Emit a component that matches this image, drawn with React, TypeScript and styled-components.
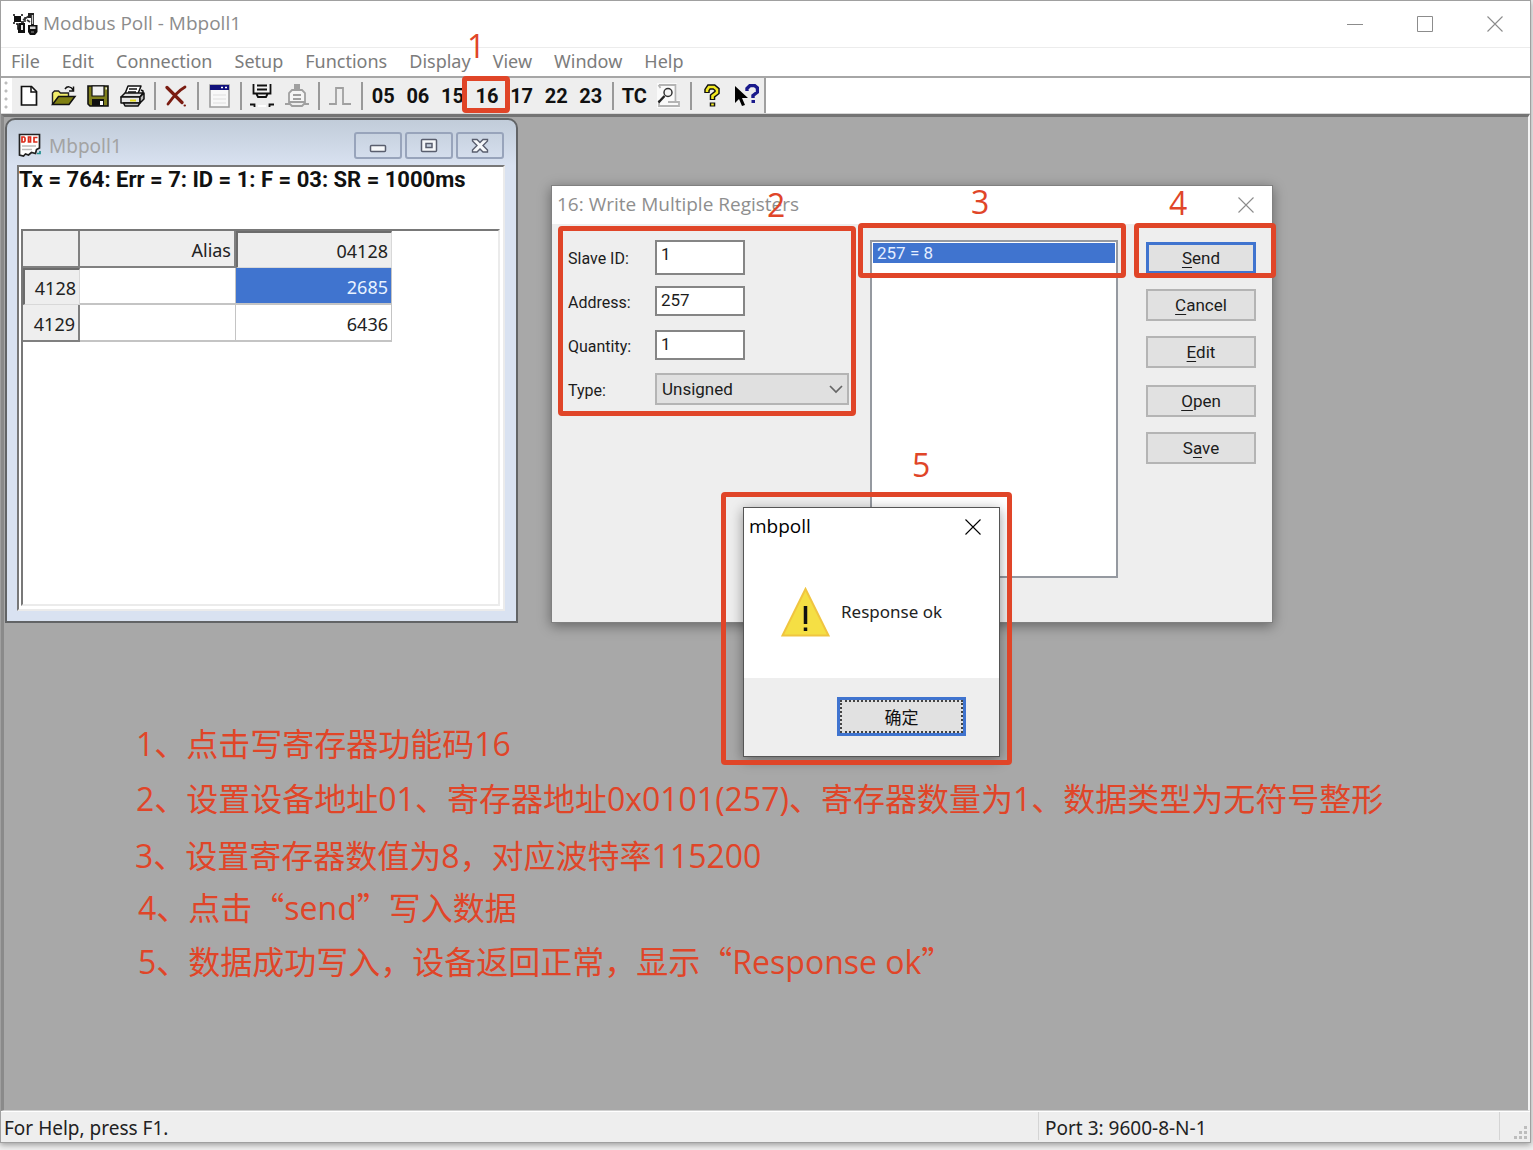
import React from "react";
import styled, { createGlobalStyle, css } from "styled-components";

const ui = `"Noto Sans", "Open Sans", "Noto Sans CJK SC", sans-serif`;
const legacy = `Roboto, "Liberation Sans", sans-serif`;
const hand = `"Open Sans", "Noto Sans CJK SC", sans-serif`;
const red = "#e04528";
const blue = "#4074cf";
const face = "#eeeeee";

const GlobalStyle = createGlobalStyle`
  * { box-sizing: border-box; }
  body { margin: 0; background: #f0f0f0; font-family: ${ui}; }
  button, input, select { font: inherit; color: inherit; margin: 0; }
`;

/* ---------- application frame ---------- */

const Screen = styled.div`
  position: relative;
  min-height: 100vh;
  padding: 0 2px 7px 0;
  display: flex;
  overflow: hidden;
`;

const Frame = styled.main`
  flex: 1;
  min-width: 0;
  display: flex;
  flex-direction: column;
  border: 1px solid #a0a0a0;
  background: #fff;
  box-shadow: 0 2px 6px rgba(0, 0, 0, 0.35);
`;

const TitleBar = styled.header`
  display: flex;
  align-items: center;
  height: 47px;
  padding-left: 12px;
  border-bottom: 1px solid #ececec;
  color: #8c8c8c;
`;

const AppTitle = styled.h1`
  flex: 1;
  margin: 0 0 0 5px;
  padding-bottom: 2px;
  font-family: "Open Sans", sans-serif;
  font-size: 19px;
  line-height: 26px;
  font-weight: 400;
`;

const CaptionButton = styled.button`
  display: grid;
  place-items: center;
  width: 70px;
  height: 46px;
  padding: 0;
  border: 0;
  background: none;
`;

const MenuBar = styled.nav`
  display: flex;
  gap: 22px;
  height: 28px;
  padding-left: 10px;
  background: #fff;
`;

const MenuItem = styled.a`
  color: #7c7c7c;
  font-size: 18px;
  line-height: 26px;
  text-decoration: none;
`;

const ToolStrip = styled.div`
  display: flex;
  height: 38px;
  border-top: 2px solid #a6a6a6;
  border-bottom: 1px solid #d8d8d8;
  background: #fff;
`;

const Grip = styled.span`
  width: 11px;
  background: radial-gradient(circle, #bdbdbd 1px, transparent 2px) 1px 1px / 8px 8px repeat-y;
`;

const ToolBar = styled.div`
  display: flex;
  align-items: center;
  background: ${face};
  border-right: 2px solid #a0a0a0;
`;

const ToolGroup = styled.div<{ $width: number }>`
  display: flex;
  width: ${(p) => p.$width}px;
  height: 34px;
`;

const ToolButton = styled.button`
  flex: 1;
  display: grid;
  place-items: center;
  padding: 0;
  border: 0;
  background: none;
  color: #111;
  font-family: ${legacy};
  font-size: 20px;
  font-weight: 700;
  line-height: 34px;
`;

const Divider = styled.span`
  width: 9px;
  height: 28px;
  background: linear-gradient(#999, #999) center / 2px 100% no-repeat;
`;

const Workspace = styled.section`
  position: relative;
  flex: 1;
  min-height: 640px;
  background: #a8a8a8;
  border: solid;
  border-width: 3px 2px 1px 3px;
  border-color: #747474 #f4f4f4 #d0d0d0 #8a8a8a;
`;

const StatusBar = styled.footer`
  display: flex;
  align-items: stretch;
  height: 31px;
  padding-bottom: 2px;
  background: ${face};
  border-top: 1px solid #fff;
  color: #222;
  font-size: 19px;
  line-height: 32px;
`;

const StatusText = styled.span`
  flex: 1;
  padding-left: 3px;
`;

const StatusPort = styled.span`
  width: 462px;
  padding-left: 6px;
  border-left: 1px solid #d4d4d4;
  border-right: 1px solid #d4d4d4;
`;

const SizeGrip = styled.span`
  width: 30px;
  display: flex;
  justify-content: flex-end;
  align-items: flex-end;
  padding: 0 3px 1px 0;
`;

/* ---------- document window ---------- */

const DocWindow = styled.article`
  position: absolute;
  left: 1px;
  top: 1px;
  width: 513px;
  height: 505px;
  display: flex;
  flex-direction: column;
  padding: 0 11px 10px 10px;
  border: 2px solid #626466;
  border-radius: 10px 10px 0 0;
  background: linear-gradient(#c1ccd9, #d9e2f1 46px);
`;

const DocTitle = styled.header`
  display: flex;
  align-items: center;
  height: 45px;
  padding: 6px 1px 0;
`;

const DocName = styled.h2`
  flex: 1;
  margin: 0 0 0 7px;
  color: #a3a3a3;
  font-size: 19px;
  line-height: 26px;
  font-weight: 400;
`;

const DocButtons = styled.div`
  display: flex;
  gap: 3px;
`;

const DocButton = styled.button`
  display: grid;
  place-items: center;
  width: 48px;
  height: 27px;
  padding: 0;
  border: 2px solid #98a4bb;
  border-radius: 3px;
  background: transparent;
`;

const sunken = css`
  border: solid;
  border-width: 2px;
  border-color: #787878 #ebebeb #ebebeb #787878;
`;

const DocClient = styled.div`
  flex: 1;
  display: flex;
  flex-direction: column;
  background: #fff;
  ${sunken}
`;

const PollStatus = styled.p`
  flex: none;
  height: 62px;
  margin: 0;
  color: #111;
  font-family: ${legacy};
  font-size: 22px;
  font-weight: 700;
  line-height: 25px;
  white-space: nowrap;
`;

const GridPane = styled.div`
  flex: 1;
  margin: 0 3px 3px 2px;
  ${sunken}
`;

const DataTable = styled.table`
  border-collapse: separate;
  border-spacing: 0;
  table-layout: fixed;
  width: 369px;
  color: #222;
  font-size: 18px;
  line-height: 28px;
`;

const Cell = styled.td<{ $selected?: boolean }>`
  height: 37px;
  padding: 2px 3px 0 0;
  text-align: right;
  border: solid #c4c4c4;
  border-width: 0 1px 2px 0;
  background: ${(p) => (p.$selected ? blue : "#fff")};
  color: ${(p) => (p.$selected ? "#e8f2ff" : "#222")};
`;

const HeadCell = styled.th<{ $active?: boolean; $width?: number }>`
  width: ${(p) => (p.$width ? p.$width + "px" : "auto")};
  height: 37px;
  padding: 2px 3px 0 0;
  text-align: right;
  font-weight: 400;
  background: ${face};
  border: solid;
  border-width: ${(p) => (p.$active ? "2px 1px 1px 2px" : "0 2px 2px 0")};
  border-color: ${(p) => (p.$active ? "#6c6c6c #d8d8d8 #d8d8d8 #6c6c6c" : "#808080")};
`;

/* ---------- dialogs ---------- */

const Dialog = styled.section<{ $x: number; $y: number; $width: number; $height: number; $active?: boolean }>`
  position: absolute;
  left: ${(p) => p.$x}px;
  top: ${(p) => p.$y}px;
  width: ${(p) => p.$width}px;
  height: ${(p) => p.$height}px;
  display: flex;
  flex-direction: column;
  border: 1px solid ${(p) => (p.$active ? "#555" : "#808080")};
  background: ${face};
  color: ${(p) => (p.$active ? "#000" : "#8e8e8e")};
  box-shadow: 0 3px 12px rgba(0, 0, 0, 0.4);
`;

const DialogTitle = styled.header`
  display: flex;
  align-items: center;
  height: 38px;
  padding-left: 5px;
  background: #fff;
`;

const DialogName = styled.h2`
  flex: 1;
  margin: 0;
  padding-bottom: 2px;
  font-family: "Open Sans", sans-serif;
  font-size: 19px;
  line-height: 26px;
  font-weight: 400;
`;

const CloseButton = styled(CaptionButton)`
  width: 52px;
  height: 38px;
`;

const DialogBody = styled.form`
  flex: 1;
  display: flex;
  align-items: flex-start;
  padding: 16px 16px 0;
  color: #1c1c1c;
  font-family: ${legacy};
  font-size: 17px;
`;

const Fields = styled.div`
  display: grid;
  grid-template-columns: 87px 194px;
  grid-auto-rows: 44px;
  align-items: center;
  margin-top: -5px;
`;

const Label = styled.label`
  padding-top: 3px;
  font-size: 16px;
  line-height: 20px;
`;

const NumberBox = styled.input<{ $tall?: boolean }>`
  width: 90px;
  height: ${(p) => (p.$tall ? 35 : 30)}px;
  padding: 0 4px ${(p) => (p.$tall ? 6 : 2)}px;
  border: 2px solid #858585;
  border-radius: 0;
  background: #fff;
  outline: 0;
`;

const SelectWrap = styled.div`
  display: grid;
  align-items: center;
  > * { grid-area: 1 / 1; }
  > svg { justify-self: end; margin-right: 6px; pointer-events: none; }
`;

const TypeSelect = styled.select`
  appearance: none;
  height: 32px;
  padding: 0 24px 0 5px;
  border: 2px solid #b4b4b4;
  border-radius: 0;
  background: #e0e0e0;
`;

const ValueList = styled.select`
  width: 248px;
  height: 338px;
  margin-left: 21px;
  padding: 1px;
  border: 2px solid #9599a0;
  border-radius: 0;
  background: #fff;
  outline: 0;
  overflow: hidden;
  option {
    height: 20px;
    min-height: 20px;
    padding: 0 4px;
    line-height: 20px;
  }
  option:checked {
    background: linear-gradient(${blue}, ${blue});
    color: #e4eeff;
    -webkit-text-fill-color: #e4eeff;
  }
`;

const Actions = styled.div`
  display: flex;
  flex-direction: column;
  gap: 17px;
  margin: 2px 0 0 28px;
`;

const ActionGroup = styled.div`
  display: grid;
  gap: 15px;
`;

const PushButton = styled.button<{ $primary?: boolean }>`
  width: 110px;
  height: 32px;
  padding: 0;
  border: ${(p) => (p.$primary ? `3px solid ${blue}` : "2px solid #b4b4b4")};
  background: #e1e1e1;
  line-height: 26px;
`;

const Mnemonic = styled.span`
  text-decoration: underline;
  text-underline-offset: 3px;
`;

const MessageBody = styled.div`
  flex: 1;
  display: flex;
  align-items: center;
  gap: 11px;
  padding-left: 37px;
  background: #fff;
  color: #222;
  font-size: 17px;
`;

const MessageText = styled.p`
  margin: 0;
  padding-bottom: 2px;
`;

const MessageFooter = styled.footer`
  display: flex;
  justify-content: flex-end;
  height: 78px;
  padding: 19px 33px 0 0;
`;

const OkButton = styled.button`
  width: 129px;
  height: 39px;
  padding: 0;
  border: 3px solid ${blue};
  outline: 2px dotted #444;
  outline-offset: -5px;
  background: #e1e1e1;
  color: #111;
  font-family: "Noto Sans CJK SC", sans-serif;
  font-size: 17px;
  line-height: 30px;
`;

/* ---------- tutorial annotations ---------- */

const Highlight = styled.div<{ $x: number; $y: number; $width: number; $height: number }>`
  position: absolute;
  left: ${(p) => p.$x}px;
  top: ${(p) => p.$y}px;
  width: ${(p) => p.$width}px;
  height: ${(p) => p.$height}px;
  border: 5px solid ${red};
  border-radius: 4px;
  pointer-events: none;
`;

const Note = styled.p<{ $x: number; $y: number }>`
  position: absolute;
  left: ${(p) => p.$x}px;
  top: ${(p) => p.$y}px;
  margin: 0;
  color: ${red};
  font-family: ${hand};
  font-size: 32px;
  line-height: 44px;
  white-space: nowrap;
  pointer-events: none;
`;

const Wide = styled.span`
  font-family: "Noto Sans CJK SC", sans-serif;
`;

/* ---------- drawings ---------- */

const Cross = ({ size = 16, color = "#8c8c8c" }) => (
  <svg width={size} height={size} viewBox="0 0 16 16" fill="none" stroke={color} strokeWidth="1.1">
    <path d="M.5.5l15 15M15.500.5l-15 15" />
  </svg>
);

const AppIcon = () => (
  <svg width="25" height="24" viewBox="0 0 25 24">
    <path d="M1 4h7v6H1z" fill="#111" />
    <path d="M0 2h2v2H0zM8 2h2v2H8zM0 10h2v2H0zM8 9h3v2H8z" fill="#444" />
    <path d="M3 12h2v5h3" fill="none" stroke="#111" strokeWidth="1.600" />
    <path d="M6 11h6v10H5v-4z" fill="#111" />
    <path d="M8 13h2v5H8z" fill="#e8e8e8" />
    <path d="M10 8l6-4M12 5v5M14 8l3 2" stroke="#333" strokeWidth="1.600" />
    <path d="M15 1h6v12h-3V6h-3z" fill="#222" />
    <path d="M19.500 3v9" stroke="#ccc" strokeWidth="1.400" />
    <path d="M15 13h9.500v7l-2.500 3h-5l-2-3z" fill="#111" />
    <path d="M17 14.500h5.500v2.500H17z" fill="#d4d4d4" />
    <path d="M18 20h3" stroke="#999" />
  </svg>
);

const NewIcon = () => (
  <svg width="18" height="22" viewBox="0 0 18 22">
    <path d="M1.500 1.500h10l5 5v13.500h-15z" fill="#fff" stroke="#111" strokeWidth="1.700" />
    <path d="M11 1.500v5.500h5.500" fill="none" stroke="#111" strokeWidth="1.500" />
  </svg>
);

const OpenIcon = () => (
  <svg width="26" height="22" viewBox="0 0 26 22">
    <path d="M1.500 19V8l2-2h4l2 2h8v4" fill="#f2ee6a" stroke="#222" strokeWidth="1.400" />
    <path d="M1.500 19.500l6-8h16.500l-6 8z" fill="#808012" stroke="#111" strokeWidth="1.500" />
    <path d="M14 4c2-3 6-3 8 1M22.500 1.500V6H18" fill="none" stroke="#111" strokeWidth="1.500" />
  </svg>
);

const SaveIcon = () => (
  <svg width="22" height="22" viewBox="0 0 22 22">
    <path d="M1 1h20v20H3l-2-2z" fill="#7f7f1c" stroke="#111" strokeWidth="1.600" />
    <path d="M5 1h12v10H5z" fill="#f0f0f0" stroke="#111" strokeWidth="1.200" />
    <path d="M5 14h12v7H5z" fill="#111" />
    <path d="M13 16h3v4h-3z" fill="#fff" />
    <path d="M18.500 2.500h1.500v2h-1.500z" fill="#eee" />
  </svg>
);

const PrintIcon = () => (
  <svg width="26" height="22" viewBox="0 0 26 22" stroke="#111" strokeWidth="1.500" strokeLinejoin="round">
    <path d="M8 1h13l-3.500 9H4.500z" fill="#fff" />
    <path d="M9 4h8M8 7h8" />
    <path d="M1 12l4-4h18l-3 4z" fill="#ddd" />
    <path d="M1 12h19v6H1z" fill="#e6e6e6" />
    <path d="M20 12l4-4v6l-4 4zM3.500 18l1.500 3h13l2-3z" fill="#bbb" />
    <path d="M10 15.500h6" stroke="#e2d91c" strokeWidth="2" />
    <path d="M21 5l2 1v2" fill="none" />
  </svg>
);

const DeleteIcon = () => (
  <svg width="22" height="22" viewBox="0 0 22 22" fill="none" stroke="#7b1d12" strokeLinecap="round">
    <path d="M2 2.500l15 15" strokeWidth="3.200" />
    <path d="M20 2C13 6 8 12 3 19" strokeWidth="2.800" />
    <path d="M19.500 20.500h.5" strokeWidth="2" />
  </svg>
);

const WindowIcon = () => (
  <svg width="21" height="24" viewBox="0 0 21 24">
    <path d="M1 1h19v22H1z" fill="#f8f8f8" stroke="#9d9d9d" strokeWidth="1.600" />
    <path d="M1 1h19v5H1z" fill="#11117c" />
    <path d="M12 3.500h2M16 3.500h2" stroke="#fff" strokeWidth="1.500" />
    <path d="M4 11h13M4 15h13M4 19h13" stroke="#dedede" />
  </svg>
);

const ConnectIcon = () => (
  <svg width="24" height="24" viewBox="0 0 24 24" fill="none" stroke="#111" strokeWidth="1.800">
    <path d="M3.500 1v9h3l1.500 3h8l1.500-3h3V1z" fill="#f4f4f4" stroke="none" />
    <path d="M3.500 0v9.500h17V0M7 1.500h10M7 5.500h10M6.500 10l1.500 3h8l1.500-3" />
    <path d="M8 22h8" stroke="#fff" />
    <path d="M0 20.500h4.500V23M24 20.500h-4.500V23" />
  </svg>
);

const DisconnectIcon = () => (
  <svg width="24" height="24" viewBox="0 0 24 24" fill="none" stroke="#a0a0a0" strokeWidth="1.800">
    <path d="M9 0h6v5H9z" fill="#a0a0a0" stroke="none" />
    <path d="M4 18V9l3-3h10l3 3v9z" fill="#f6f6f6" />
    <path d="M8 11h8M8 15h8M0 20h5l2 2h10l2-2h5" />
  </svg>
);

const PulseIcon = () => (
  <svg width="22" height="20" viewBox="0 0 22 20" fill="none" stroke="#a0a0a0" strokeWidth="1.800">
    <path d="M0 18h7V2h7v16h8" />
  </svg>
);

const TrafficIcon = () => (
  <svg width="25" height="25" viewBox="0 0 25 25" fill="none">
    <path d="M1 0h20v17h3v8H1z" fill="#fafafa" />
    <path d="M3 2h16.500v16M2.500 2l2 3M3 17v6h20v-4H12" stroke="#b4b4b4" strokeWidth="1.800" />
    <circle cx="12" cy="9.500" r="4" stroke="#333" strokeWidth="1.500" fill="#f4f4f4" />
    <path d="M8.500 13l-6 6.500" stroke="#222" strokeWidth="2.400" />
  </svg>
);

const QuestionIcon = () => (
  <svg width="18" height="24" viewBox="0 0 18 24" fill="none">
    <path d="M4 9V6l2-3h5l3 2.500v3L9.500 12v4M9.500 18.500v4" stroke="#111" strokeWidth="5.500" />
    <path d="M4 8V6l2-3h5l3 2.500v3L9.500 12v3M9.500 19.500v2" stroke="#f3ea22" strokeWidth="2.600" />
  </svg>
);

const ContextHelpIcon = () => (
  <svg width="25" height="24" viewBox="0 0 25 24" fill="none">
    <path d="M1 2v17l4-4 3 7 3-1-3-7h6z" fill="#000" />
    <path d="M13 7V4.500l3-3h4.500l3 2.500V8L19 11.500V14" stroke="#1a1a8c" strokeWidth="3.400" />
    <path d="M17.500 16h3.500v3h-3.500z" fill="#1a1a8c" />
  </svg>
);

const DocIcon = () => (
  <svg width="24" height="25" viewBox="0 0 24 25">
    <path d="M1.500 1.500h20V15l-3 1.500-1 4-4-1-3 2.500-3-1-2 2-4-1z" fill="#fff" stroke="#222" strokeWidth="1.700" />
    <path d="M22 18v2.500h-3" fill="none" stroke="#1f8d8d" strokeWidth="1.700" />
    <g fill="none" stroke="#dc2c1c" strokeWidth="1.700">
      <path d="M4 4v5h2l1-1V5L6 4zM10.500 4h2v5h-2zM19.500 4.500H16v4.500h3.500" />
    </g>
    <path d="M4 13h14M4 16.500h10" stroke="#bbb" strokeWidth="1.300" />
  </svg>
);

const MinGlyph = () => (
  <svg width="18" height="18" viewBox="0 0 18 18">
    <rect x="1.500" y="8.500" width="15" height="6" rx="1" fill="#f6f8fa" stroke="#595e6e" strokeWidth="1.500" />
  </svg>
);

const MaxGlyph = () => (
  <svg width="18" height="16" viewBox="0 0 18 16" stroke="#595e6e" strokeWidth="1.500">
    <rect x="1.500" y="1.500" width="15" height="12" rx="1" fill="#f6f8fa" />
    <rect x="6" y="5.500" width="6" height="4" fill="#c8d2df" />
  </svg>
);

const CloseGlyph = () => (
  <svg width="18" height="16" viewBox="0 0 18 16">
    <path d="M1.500 1.500h4.500L9 4.500l3-3h4.500v1.500L12 7.500l4.500 4.500v2H12L9 11l-3 3H1.500v-2L6 7.500 1.500 3z" fill="#f6f8fa" stroke="#595e6e" strokeWidth="1.400" />
  </svg>
);

const WarningIcon = () => (
  <svg width="49" height="50" viewBox="0 0 49 50">
    <path d="M24.500 2L47.500 48.500H1.500z" fill="#f5df44" stroke="#f0c540" strokeWidth="2" />
    <path d="M24.500 19v18M24.500 40.500v3.500" stroke="#111" strokeWidth="3.500" />
  </svg>
);

/* ---------- content ---------- */

const menus = ["File", "Edit", "Connection", "Setup", "Functions", "Display", "View", "Window", "Help"];
const functionCodes = ["05", "06", "15", "16", "17", "22", "23"];
const rows = [
  { address: "4128", alias: "", value: "2685" },
  { address: "4129", alias: "", value: "6436" },
];

const highlights = [
  { x: 462, y: 76, width: 48, height: 37 },
  { x: 558, y: 226, width: 298, height: 190 },
  { x: 858, y: 223, width: 268, height: 55 },
  { x: 1134, y: 223, width: 142, height: 55 },
  { x: 721, y: 492, width: 291, height: 273 },
];

const notes: { x: number; y: number; text: React.ReactNode }[] = [
  { x: 467, y: 24, text: "1" },
  { x: 767, y: 183, text: "2" },
  { x: 971, y: 180, text: "3" },
  { x: 1169, y: 181, text: "4" },
  { x: 912, y: 443, text: "5" },
  { x: 136, y: 722, text: "1、点击写寄存器功能码16" },
  { x: 136, y: 777, text: "2、设置设备地址01、寄存器地址0x0101(257)、寄存器数量为1、数据类型为无符号整形" },
  { x: 135, y: 834, text: "3、设置寄存器数值为8，对应波特率115200" },
  { x: 138, y: 884, text: <>4、点击<Wide>“</Wide>send<Wide>”</Wide>写入数据</> },
  { x: 138, y: 938, text: <>5、数据成功写入，设备返回正常，显示<Wide>“</Wide>Response ok<Wide>”</Wide></> },
];

const Tool = ({ name, children }: { name: string; children: React.ReactNode }) => (
  <ToolButton type="button" aria-label={name}>{children}</ToolButton>
);

export default function App() {
  return (
    <Screen>
      <GlobalStyle />
      <Frame>
        <TitleBar>
          <AppIcon />
          <AppTitle>Modbus Poll - Mbpoll1</AppTitle>
          <CaptionButton aria-label="Minimize">
            <svg width="16" height="16"><path d="M0 8.500h16" stroke="#8c8c8c" /></svg>
          </CaptionButton>
          <CaptionButton aria-label="Maximize">
            <svg width="16" height="16"><path d="M.5.5h15v15H.5z" fill="none" stroke="#8c8c8c" /></svg>
          </CaptionButton>
          <CaptionButton aria-label="Close"><Cross /></CaptionButton>
        </TitleBar>
        <MenuBar>
          {menus.map((m) => <MenuItem key={m} href="#">{m}</MenuItem>)}
        </MenuBar>
        <ToolStrip>
          <Grip />
          <ToolBar>
            <ToolGroup $width={138}>
              <Tool name="New"><NewIcon /></Tool>
              <Tool name="Open"><OpenIcon /></Tool>
              <Tool name="Save"><SaveIcon /></Tool>
              <Tool name="Print"><PrintIcon /></Tool>
            </ToolGroup>
            <Divider />
            <ToolGroup $width={34}><Tool name="Delete"><DeleteIcon /></Tool></ToolGroup>
            <Divider />
            <ToolGroup $width={34}><Tool name="Definition"><WindowIcon /></Tool></ToolGroup>
            <Divider />
            <ToolGroup $width={69}>
              <Tool name="Connect"><ConnectIcon /></Tool>
              <Tool name="Disconnect"><DisconnectIcon /></Tool>
            </ToolGroup>
            <Divider />
            <ToolGroup $width={34}><Tool name="Poll once"><PulseIcon /></Tool></ToolGroup>
            <Divider />
            <ToolGroup $width={242}>
              {functionCodes.map((c) => <ToolButton key={c} type="button">{c}</ToolButton>)}
            </ToolGroup>
            <Divider />
            <ToolGroup $width={69}>
              <ToolButton type="button">TC</ToolButton>
              <Tool name="Traffic"><TrafficIcon /></Tool>
            </ToolGroup>
            <Divider />
            <ToolGroup $width={69}>
              <Tool name="About"><QuestionIcon /></Tool>
              <Tool name="Context help"><ContextHelpIcon /></Tool>
            </ToolGroup>
          </ToolBar>
        </ToolStrip>

        <Workspace>
          <DocWindow>
            <DocTitle>
              <DocIcon />
              <DocName>Mbpoll1</DocName>
              <DocButtons>
                <DocButton aria-label="Minimize"><MinGlyph /></DocButton>
                <DocButton aria-label="Maximize"><MaxGlyph /></DocButton>
                <DocButton aria-label="Close"><CloseGlyph /></DocButton>
              </DocButtons>
            </DocTitle>
            <DocClient>
              <PollStatus>Tx = 764: Err = 7: ID = 1: F = 03: SR = 1000ms</PollStatus>
              <GridPane>
                <DataTable>
                  <thead>
                    <tr>
                      <HeadCell $width={57} />
                      <HeadCell $width={156}>Alias</HeadCell>
                      <HeadCell $active>04128</HeadCell>
                    </tr>
                  </thead>
                  <tbody>
                    {rows.map((r, i) => (
                      <tr key={r.address}>
                        <HeadCell scope="row" $active={i === 0}>{r.address}</HeadCell>
                        <Cell>{r.alias}</Cell>
                        <Cell $selected={i === 0}>{r.value}</Cell>
                      </tr>
                    ))}
                  </tbody>
                </DataTable>
              </GridPane>
            </DocClient>
          </DocWindow>

          <Dialog role="dialog" aria-label="Write Multiple Registers" $x={547} $y={68} $width={722} $height={438}>
            <DialogTitle>
              <DialogName>16: Write Multiple Registers</DialogName>
              <CloseButton aria-label="Close"><Cross /></CloseButton>
            </DialogTitle>
            <DialogBody onSubmit={(e) => e.preventDefault()}>
              <Fields>
                <Label htmlFor="slave">Slave ID:</Label>
                <NumberBox id="slave" defaultValue="1" $tall />
                <Label htmlFor="address">Address:</Label>
                <NumberBox id="address" defaultValue="257" />
                <Label htmlFor="quantity">Quantity:</Label>
                <NumberBox id="quantity" defaultValue="1" />
                <Label htmlFor="type">Type:</Label>
                <SelectWrap>
                  <TypeSelect id="type" defaultValue="Unsigned">
                    <option>Unsigned</option>
                  </TypeSelect>
                  <svg width="14" height="9" viewBox="0 0 14 9" fill="none" stroke="#666" strokeWidth="1.700">
                    <path d="M1 1l6 6 6-6" />
                  </svg>
                </SelectWrap>
              </Fields>
              <ValueList aria-label="Register values" size={10} defaultValue="257 = 8">
                <option>257 = 8</option>
              </ValueList>
              <Actions>
                <ActionGroup>
                  <PushButton type="submit" $primary><Mnemonic>S</Mnemonic>end</PushButton>
                  <PushButton type="button"><Mnemonic>C</Mnemonic>ancel</PushButton>
                  <PushButton type="button"><Mnemonic>E</Mnemonic>dit</PushButton>
                </ActionGroup>
                <ActionGroup>
                  <PushButton type="button"><Mnemonic>O</Mnemonic>pen</PushButton>
                  <PushButton type="button">S<Mnemonic>a</Mnemonic>ve</PushButton>
                </ActionGroup>
              </Actions>
            </DialogBody>
          </Dialog>

          <Dialog role="alertdialog" aria-label="mbpoll" $x={739} $y={390} $width={257} $height={250} $active>
            <DialogTitle>
              <DialogName>mbpoll</DialogName>
              <CloseButton aria-label="Close"><Cross color="#000" /></CloseButton>
            </DialogTitle>
            <MessageBody>
              <WarningIcon />
              <MessageText>Response ok</MessageText>
            </MessageBody>
            <MessageFooter>
              <OkButton type="button">确定</OkButton>
            </MessageFooter>
          </Dialog>
        </Workspace>

        <StatusBar>
          <StatusText>For Help, press F1.</StatusText>
          <StatusPort>Port 3: 9600-8-N-1</StatusPort>
          <SizeGrip>
            <svg width="13" height="13" viewBox="0 0 13 13" fill="#bdbdbd">
              <path d="M0 10h3v3H0zM5 10h3v3H5zM10 10h3v3h-3zM5 5h3v3H5zM10 5h3v3h-3zM10 0h3v3h-3z" />
            </svg>
          </SizeGrip>
        </StatusBar>
      </Frame>

      {highlights.map((h, i) => (
        <Highlight key={i} $x={h.x} $y={h.y} $width={h.width} $height={h.height} />
      ))}
      {notes.map((n, i) => (
        <Note key={i} $x={n.x} $y={n.y}>{n.text}</Note>
      ))}
    </Screen>
  );
}
